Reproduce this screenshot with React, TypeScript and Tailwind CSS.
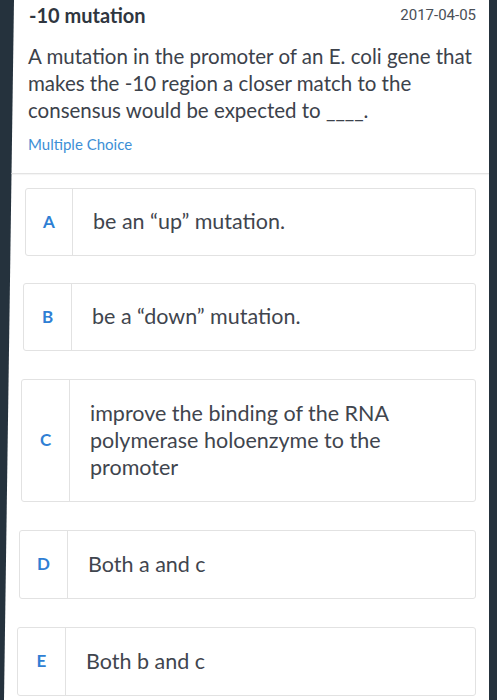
import React from "react";

const options = [
  { l: "A", lines: ["be an \u201cup\u201d mutation."], ml: "ml-[21px]", h: "h-[68px]", col: "w-[47px]", mt: "mt-[14px]" },
  { l: "B", lines: ["be a \u201cdown\u201d mutation."], ml: "ml-[19px]", h: "h-[68px]", col: "w-[48px]", mt: "mt-[27px]" },
  { l: "C", lines: ["improve the binding of the RNA", "polymerase holoenzyme to the", "promoter"], ml: "ml-[17px]", h: "h-[123px]", col: "w-[48px]", mt: "mt-[28px]" },
  { l: "D", lines: ["Both a and c"], ml: "ml-[15px]", h: "h-[69px]", col: "w-[48px]", mt: "mt-[28px]" },
  { l: "E", lines: ["Both b and c"], ml: "ml-[13px]", h: "h-[69px]", col: "w-[48px]", mt: "mt-[28px]" },
];

export default function App() {
  return (
    <div className="w-[497px] h-[700px] bg-[#25323d] overflow-hidden" style={{ fontFamily: "Lato, 'Open Sans', sans-serif" }}>
      <div className="ml-[4px] mr-[8px] h-[700px] bg-white [clip-path:polygon(10px_0,100%_0,100%_100%,0_100%)]">
        <div className="pl-[24px] pr-[10px]">
          <div className="flex items-center justify-between h-[30px]">
            <div className="pl-[1px] text-[20px] font-bold text-[#2f3640]">-10 mutation</div>
            <div className="pr-[3px] text-[15px] text-[#4a4f57]" style={{ fontFamily: "Roboto, sans-serif" }}>2017-04-05</div>
          </div>
          <div className="mt-[13px] text-[20.5px] leading-[27px] text-[#3c424b] pr-[4px]">
            A mutation in the promoter of an E. coli gene that makes the -10 region a closer match to the consensus would be expected to ____.
          </div>
          <div className="mt-[9px] text-[15px] text-[#3d8fd6]">Multiple Choice</div>
        </div>
        <div className="mt-[17px] h-[1px] bg-[#e3e3e3] shadow-[0_1px_1px_rgba(0,0,0,0.05)]" />
        {options.map((o) => (
          <div key={o.l} className={`${o.mt} ${o.ml} mr-[13px] ${o.h} flex border border-[#e2e2e2] rounded-[3px]`}>
            <div className={`${o.col} shrink-0 flex items-center justify-center border-r border-[#e2e2e2] text-[17px] font-bold text-[#2f7fd4]`}>
              {o.l}
            </div>
            <div className="flex flex-col justify-center pl-[20px] text-[21.5px] leading-[27px] text-[#3f454e]">
              {o.lines.map((t) => (
                <div key={t}>{t}</div>
              ))}
            </div>
          </div>
        ))}
      </div>
    </div>
  );
}
